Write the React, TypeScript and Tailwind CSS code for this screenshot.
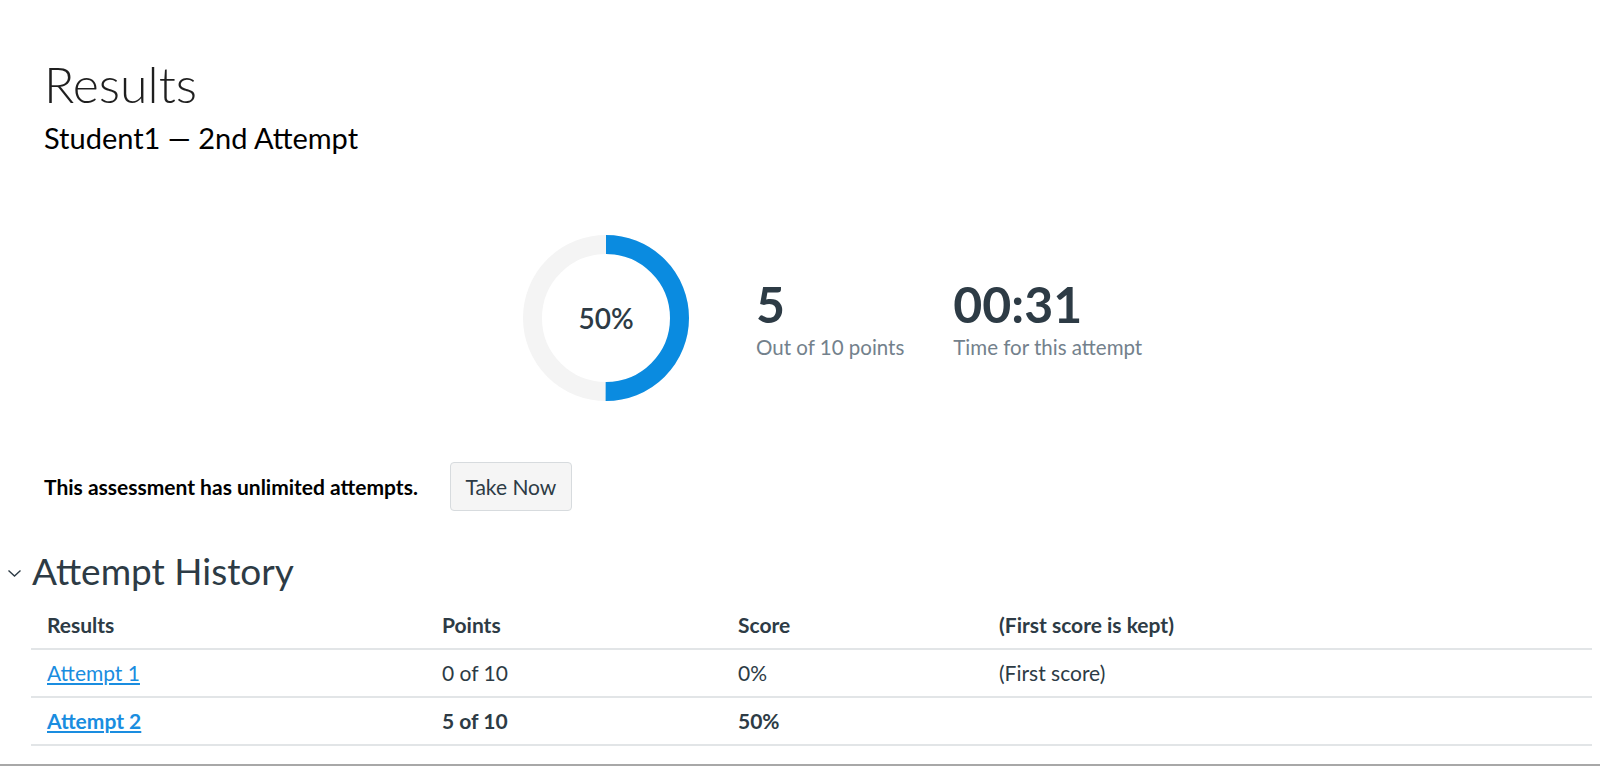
import React from "react";

const font = { fontFamily: "Lato, 'Open Sans', sans-serif" };

function Donut({ percent }: { percent: number }) {
  const r = 73.5;
  const c = 2 * Math.PI * r;
  return (
    <div className="relative w-[166px] h-[166px] shrink-0">
      <svg width="166" height="166" viewBox="0 0 166 166">
        <circle cx="83" cy="83" r={r} fill="none" stroke="#f4f4f4" strokeWidth="19" />
        <circle
          cx="83"
          cy="83"
          r={r}
          fill="none"
          stroke="#0a8be0"
          strokeWidth="19"
          strokeDasharray={`${(c * percent) / 100} ${c}`}
          transform="rotate(-90 83 83)"
        />
      </svg>
      <div className="absolute inset-0 flex items-center justify-center text-[28px] font-semibold text-[#2d3b45]">
        {percent}%
      </div>
    </div>
  );
}

function Stat({ value, label }: { value: string; label: string }) {
  return (
    <div className="flex flex-col">
      <div className="text-[50px] font-bold leading-none text-[#2d3b45]">{value}</div>
      <div className="mt-[8px] text-[20.5px] leading-none text-[#73818c]">{label}</div>
    </div>
  );
}

const rows = [
  { name: "Attempt 1", points: "0 of 10", score: "0%", note: "(First score)", bold: false },
  { name: "Attempt 2", points: "5 of 10", score: "50%", note: "", bold: true },
];

export default function App() {
  return (
    <div className="min-h-screen bg-white text-[#2d3b45]" style={font}>
      <div className="border-b-2 border-[#a8a8a8] pb-[18px]">
        {/* header */}
        <div className="pl-[44px] pt-[59px]">
          <h1 className="text-[50px] font-light leading-none text-[#1f1f1f]">Results</h1>
          <div className="mt-[14px] text-[29px] leading-none text-black">Student1 — 2nd Attempt</div>
        </div>

        {/* score summary */}
        <div className="mt-[83px] flex items-center pl-[523px]">
          <Donut percent={50} />
          <div className="ml-[67px] flex gap-[49px]">
            <Stat value="5" label="Out of 10 points" />
            <Stat value="00:31" label="Time for this attempt" />
          </div>
        </div>

        {/* attempts */}
        <div className="mt-[61px] flex items-center pl-[44px]">
          <span className="text-[21px] font-bold text-black">This assessment has unlimited attempts.</span>
          <button className="ml-[32px] h-[49px] w-[122px] rounded-[4px] border border-[#d7dbde] bg-[#f5f5f5] text-[21px] text-[#2d3b45]">
            Take Now
          </button>
        </div>

        {/* attempt history */}
        <div className="mt-[41px] flex items-center">
          <svg width="15" height="10" viewBox="0 0 15 10" className="ml-[7px] mr-[10px] mt-[4px]">
            <path d="M1.5 2.5 L7.5 8 L13.5 2.5" fill="none" stroke="#2d3b45" strokeWidth="1.4" />
          </svg>
          <h2 className="text-[37px] leading-none text-[#2d3b45]">Attempt History</h2>
        </div>

        <div className="ml-[31px] mr-[8px] mt-[12px]">
          <table className="w-full border-collapse text-[21px]">
            <thead>
              <tr className="border-b-2 border-[#e2e5e7] h-[48px] text-left">
                <th className="w-[395px] pl-[16px] font-bold">Results</th>
                <th className="w-[296px] pl-[16px] font-bold">Points</th>
                <th className="w-[261px] pl-[16px] font-bold">Score</th>
                <th className="pl-[16px] font-bold">(First score is kept)</th>
              </tr>
            </thead>
            <tbody>
              {rows.map((r) => (
                <tr key={r.name} className={`border-b-2 border-[#e2e5e7] h-[48px] ${r.bold ? "font-bold" : ""}`}>
                  <td className="pl-[16px]">
                    <a href="#" className="text-[#1a8de0] underline">
                      {r.name}
                    </a>
                  </td>
                  <td className="pl-[16px]">{r.points}</td>
                  <td className="pl-[16px]">{r.score}</td>
                  <td className="pl-[16px]">{r.note}</td>
                </tr>
              ))}
            </tbody>
          </table>
        </div>
      </div>
    </div>
  );
}
